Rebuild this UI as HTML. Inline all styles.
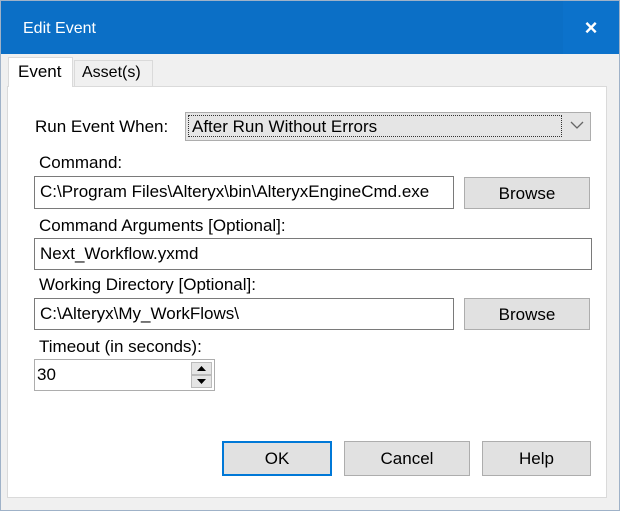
<!DOCTYPE html>
<html><head><meta charset="utf-8"><style>
*{box-sizing:border-box;margin:0;padding:0}
body{width:620px;height:511px;overflow:hidden;background:#f0f0f0;font-family:"Liberation Sans",sans-serif;font-size:17px;color:#000;position:relative}
.a{position:absolute}
.frame{left:0;top:0;width:620px;height:511px;border:1px solid #9fb2c8;z-index:5;pointer-events:none}
.title{left:0;top:0;width:620px;height:54px;background:#0b6fc6;color:#fff;font-size:16px}
.title span{position:absolute;left:23px;top:20px}
.close{left:563px;top:0;width:56px;height:54px;background:#0c72cb;color:#fff;font-size:22px;font-weight:bold;text-align:center;line-height:56px}
.panel{left:7px;top:86px;width:600px;height:412px;background:#fff;border:1px solid #dadada}
.tab1{left:8px;top:57px;width:65px;height:30px;background:#fff;border:1px solid #dadada;border-bottom:none;padding:4px 0 0 9px;z-index:2}
.tab2{left:74px;top:60px;width:79px;height:26px;background:#f0f0f0;border:1px solid #dadada;border-bottom:none;padding:3px 0 0 7px;font-size:16px}
.tb{background:#fff;border:1px solid #7a7a7a;padding:5px 0 0 5px;white-space:nowrap}
.btn{background:#e1e1e1;border:1px solid #adadad;text-align:center}
.lbl{white-space:nowrap}
</style></head><body>
<div class="a title"><span>Edit Event</span></div>
<div class="a close">×</div>
<div class="a panel"></div>
<div class="a tab1">Event</div>
<div class="a tab2">Asset(s)</div>

<div class="a lbl" style="left:35px;top:117px">Run Event When:</div>
<div class="a" style="left:185px;top:112px;width:406px;height:29px;background:#e5e5e5;border:1px solid #adadad"></div>
<div class="a" style="left:188px;top:115px;width:374px;height:22px;border:1px dotted #333;padding:1px 0 0 3px">After Run Without Errors</div>
<svg class="a" style="left:570px;top:121px" width="14" height="9"><path d="M1 1 L7 7 L13 1" fill="none" stroke="#666" stroke-width="1.3"/></svg>

<div class="a lbl" style="left:39px;top:153px">Command:</div>
<div class="a tb" style="left:34px;top:176px;width:420px;height:33px">C:\Program Files\Alteryx\bin\AlteryxEngineCmd.exe</div>
<div class="a btn" style="left:464px;top:177px;width:126px;height:32px;line-height:31px">Browse</div>

<div class="a lbl" style="left:39px;top:216px">Command Arguments [Optional]:</div>
<div class="a tb" style="left:34px;top:238px;width:558px;height:32px">Next_Workflow.yxmd</div>

<div class="a lbl" style="left:39px;top:275px">Working Directory [Optional]:</div>
<div class="a tb" style="left:34px;top:298px;width:420px;height:32px">C:\Alteryx\My_WorkFlows\</div>
<div class="a btn" style="left:464px;top:298px;width:126px;height:32px;line-height:31px">Browse</div>

<div class="a lbl" style="left:39px;top:337px">Timeout (in seconds):</div>
<div class="a tb" style="left:34px;top:359px;width:181px;height:32px;border-color:#adadad;padding-left:2px">30</div>
<div class="a" style="left:191px;top:362px;width:21px;height:13px;background:#e5e5e5;border:1px solid #bbb"></div>
<div class="a" style="left:191px;top:375px;width:21px;height:13px;background:#e5e5e5;border:1px solid #bbb"></div>
<svg class="a" style="left:191px;top:362px" width="21" height="26"><path d="M6 9 L15 9 L10.5 4 Z M6 17 L15 17 L10.5 22 Z" fill="#000"/></svg>

<div class="a btn" style="left:222px;top:441px;width:110px;height:35px;border:2px solid #0078d7;line-height:31px">OK</div>
<div class="a btn" style="left:344px;top:441px;width:126px;height:35px;line-height:33px">Cancel</div>
<div class="a btn" style="left:482px;top:441px;width:109px;height:35px;line-height:33px">Help</div>
<div class="a frame"></div>
</body></html>
